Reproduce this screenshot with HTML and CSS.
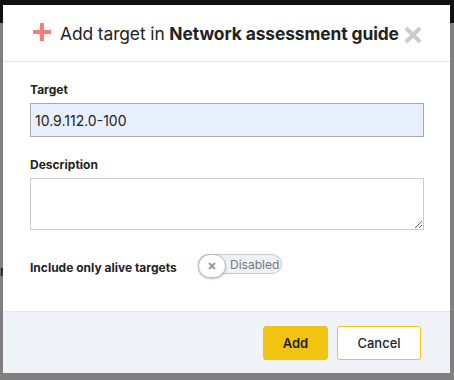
FILE: index.html
```html
<!DOCTYPE html>
<html>
<head>
<meta charset="utf-8">
<link rel="stylesheet" href="styles.css">
</head>
<body>
<div class="backdrop">
  <div class="topbar"></div>
  <span class="stray">r</span>
  <div class="modal">
    <div class="modal-header">
      <svg class="plus" width="20" height="20" viewBox="0 0 20 20"><path d="M10 1v18M1 10h18" stroke="#f47f72" stroke-width="4"/></svg>
      <h1 class="title">Add target in <b>Network assessment guide</b></h1>
      <svg class="close" width="18" height="18" viewBox="0 0 18 18"><path d="M2 2L16 16M16 2L2 16" stroke="#cccccc" stroke-width="4"/></svg>
    </div>
    <div class="modal-body">
      <label class="label">Target</label>
      <input class="input" type="text" value="10.9.112.0-100">
      <label class="label desc-label">Description</label>
      <textarea class="textarea"></textarea>
      <div class="switch-row">
        <span class="label switch-label">Include only alive targets</span>
        <div class="toggle">
          <span class="knob">
            <svg width="10" height="10" viewBox="0 0 10 10"><path d="M2 2L8 8M8 2L2 8" stroke="#9a9a9a" stroke-width="2"/></svg>
          </span>
          <span class="toggle-text">Disabled</span>
        </div>
      </div>
    </div>
    <div class="modal-footer">
      <button class="btn btn-add">Add</button>
      <button class="btn btn-cancel">Cancel</button>
    </div>
  </div>
</div>
</body>
</html>
```
FILE: styles.css
```css
* { box-sizing: border-box; }
html, body { margin: 0; padding: 0; }
body {
  width: 454px;
  height: 380px;
  overflow: hidden;
  font-family: Inter, "Noto Sans", sans-serif;
  background: #808080;
}
.backdrop {
  position: relative;
  width: 454px;
  height: 380px;
  background: #808080;
  padding: 5px 3px 0 3px;
}
.topbar {
  position: absolute;
  left: 0; top: 0;
  width: 454px;
  height: 23px;
  background: #111111;
}
.stray {
  position: absolute;
  left: 0;
  top: 263px;
  font-size: 13px;
  font-weight: 600;
  color: #222;
}
.modal {
  position: relative;
  width: 447px;
  height: 368px;
  background: #fff;
  display: flex;
  flex-direction: column;
}
.modal-header {
  height: 57px;
  border-bottom: 1px solid #e5e5e5;
  display: flex;
  align-items: center;
  padding: 0 0 0 29px;
}
.plus { flex: none; margin-top: -2px; }
.title {
  margin: 0 0 0 8px;
  font-size: 17.4px;
  font-weight: 400;
  color: #222;
  letter-spacing: -0.1px;
  white-space: nowrap;
}
.title b { font-weight: 700; }
.close { flex: none; margin: 4px 0 0 5px; }
.modal-body {
  flex: 1;
  padding: 20px 27px 0 27px;
  display: flex;
  flex-direction: column;
}
.label {
  font-size: 12px;
  font-weight: 700;
  color: #222;
  line-height: 16px;
}
.input {
  margin-top: 5px;
  width: 394px;
  height: 34px;
  border: 1px solid #a9a9a9;
  background: #e8f0fe;
  font-family: Inter, "Noto Sans", sans-serif;
  font-size: 14px;
  color: #222;
  padding: 0 4px;
  outline: none;
}
.desc-label { margin-top: 20px; }
.textarea {
  margin-top: 5px;
  width: 394px;
  height: 52px;
  border: 1px solid #cccccc;
  resize: vertical;
  display: block;
  font-family: Inter, sans-serif;
}
.switch-row {
  display: flex;
  align-items: center;
  margin-top: 22px;
}
.switch-label { width: 168px; margin-top: 8px; }
.toggle {
  position: relative;
  width: 84px;
  height: 20px;
  border: 1px solid #c8c8c8;
  border-radius: 10px;
  background: #eef1f6;
  display: flex;
  align-items: center;
}
.knob {
  position: absolute;
  left: -1px;
  top: -1px;
  width: 28px;
  height: 24px;
  border-radius: 12px;
  background: #fff;
  border: 1px solid #bbb;
  box-shadow: 0 1px 2px rgba(0,0,0,0.25);
  display: flex;
  align-items: center;
  justify-content: center;
}
.toggle-text {
  margin-left: 31px;
  font-size: 12px;
  color: #777;
}
.modal-footer {
  height: 62px;
  background: #f0f3f8;
  border-top: 1px solid #e2e5ea;
  display: flex;
  justify-content: flex-end;
  align-items: center;
  gap: 9px;
  padding-right: 29px;
}
.btn {
  height: 34px;
  border-radius: 3px;
  font-family: Inter, sans-serif;
  font-size: 13px;
  font-weight: 600;
  color: #222;
  cursor: pointer;
}
.btn-add {
  width: 65px;
  background: #f1c40f;
  border: 1px solid #f1c40f;
}
.btn-cancel {
  width: 84px;
  background: #fff;
  border: 1px solid #f1c40f;
  font-weight: 500;
}
```
